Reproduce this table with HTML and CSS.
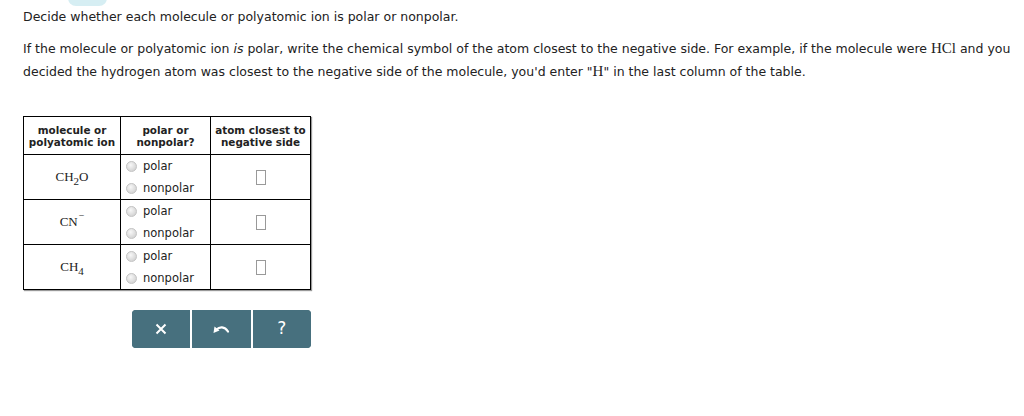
FILE: index.html
```html
<!DOCTYPE html>
<html>
<head>
<meta charset="utf-8">
<link rel="stylesheet" href="styles.css">
</head>
<body>
<div class="tab"></div>
<div class="content">
  <p class="intro">Decide whether each molecule or polyatomic ion is polar or nonpolar.</p>
  <p class="instr">If the molecule or polyatomic ion <i>is</i> polar, write the chemical symbol of the atom closest to the negative side. For example, if the molecule were <span class="chem">HCl</span> and you decided the hydrogen atom was closest to the negative side of the molecule, you'd enter "<span class="chem">H</span>" in the last column of the table.</p>
  <table class="grid">
    <tr class="head">
      <th class="c1">molecule or<br>polyatomic ion</th>
      <th class="c2">polar or<br>nonpolar?</th>
      <th class="c3">atom closest to<br>negative side</th>
    </tr>
    <tr>
      <td class="formula">CH<span class="sub">2</span>O</td>
      <td class="opts"><label><span class="radio"></span>polar</label><label><span class="radio"></span>nonpolar</label></td>
      <td class="ans"><span class="box"></span></td>
    </tr>
    <tr>
      <td class="formula">CN<span class="sup">−</span></td>
      <td class="opts"><label><span class="radio"></span>polar</label><label><span class="radio"></span>nonpolar</label></td>
      <td class="ans"><span class="box"></span></td>
    </tr>
    <tr>
      <td class="formula">CH<span class="sub">4</span></td>
      <td class="opts"><label><span class="radio"></span>polar</label><label><span class="radio"></span>nonpolar</label></td>
      <td class="ans"><span class="box"></span></td>
    </tr>
  </table>
  <div class="actions">
    <button class="btn" aria-label="clear"><svg width="12" height="12" viewBox="0 0 12 12"><path d="M1.5 1.5L10.5 10.5M10.5 1.5L1.5 10.5" stroke="#fff" stroke-width="2" fill="none"/></svg></button>
    <button class="btn" aria-label="undo"><svg width="18" height="12" viewBox="0 0 18 12"><path d="M4.5 6.5C7.5 3.5 12.5 3 16 8.5" stroke="#fff" stroke-width="2.2" fill="none" stroke-linecap="round"/><path d="M1.5 10L2.5 3.5L7.5 7.5Z" fill="#fff"/></svg></button>
    <button class="btn q">?</button>
  </div>
</div>
</body>
</html>
```
FILE: styles.css
```css
html, body {
  margin: 0;
  padding: 0;
  background: #fff;
}
body {
  font-family: "DejaVu Sans", Verdana, sans-serif;
  color: #222;
  width: 1024px;
  height: 416px;
  overflow: hidden;
  position: relative;
}
.tab {
  position: absolute;
  left: 68px;
  top: -14px;
  width: 39px;
  height: 20px;
  border-radius: 8px;
  background: #d6eef3;
}
.content {
  padding: 9px 0 0 23px;
}
.intro {
  margin: 0;
  font-size: 12.5px;
  line-height: 16px;
}
.instr {
  margin: 12px 0 0 0;
  font-size: 12.5px;
  line-height: 23px;
  width: 995px;
}
.chem {
  font-family: "Liberation Serif", "Times New Roman", serif;
  font-size: 15px;
  line-height: 1;
}
.grid {
  margin-top: 33px;
  border-collapse: collapse;
  border: 1px solid #000;
  box-shadow: 1px 1px 1px #999;
  font-size: 11px;
}
.grid th, .grid td {
  border: 1px solid #000;
  padding: 0;
}
.grid th {
  font-weight: bold;
  font-size: 10.4px;
  height: 36px;
  line-height: 12px;
  padding-top: 1px;
  vertical-align: middle;
}
.c1 { width: 96px; }
.c2 { width: 89px; }
.c3 { width: 99px; }
.formula {
  text-align: center;
  font-family: "Liberation Serif", "Times New Roman", serif;
  font-size: 13px;
  line-height: 16px;
}
.formula .sub {
  font-size: 11px;
  position: relative;
  top: 4px;
}
.formula .sup {
  font-size: 10px;
  position: relative;
  top: -7px;
  margin-left: 1px;
}
.opts label {
  display: flex;
  align-items: center;
  height: 22px;
  font-size: 11.5px;
  color: #222;
  padding-left: 5px;
}
.radio {
  width: 11px;
  height: 11px;
  border-radius: 50%;
  background: radial-gradient(circle at 40% 35%, #f8f8f8, #d4d4d4 75%);
  border: 1px solid #c4c4c4;
  box-sizing: border-box;
  margin-right: 6px;
}
.ans {
  text-align: center;
}
.box {
  display: inline-block;
  width: 10px;
  height: 15px;
  border: 1px solid #999;
  box-sizing: border-box;
  vertical-align: middle;
}
.actions {
  display: flex;
  margin: 20px 0 0 109px;
  width: 179px;
  height: 38px;
  border-radius: 4px;
  overflow: hidden;
  background: #47707e;
}
.btn {
  flex: 1;
  border: none;
  background: #47707e;
  color: #fff;
  display: flex;
  align-items: center;
  justify-content: center;
  padding: 0;
  margin: 0;
  font-family: "DejaVu Sans", sans-serif;
}
.btn + .btn {
  border-left: 2px solid #fff;
}
.q {
  font-size: 17px;
  padding-bottom: 2px;
}
```
